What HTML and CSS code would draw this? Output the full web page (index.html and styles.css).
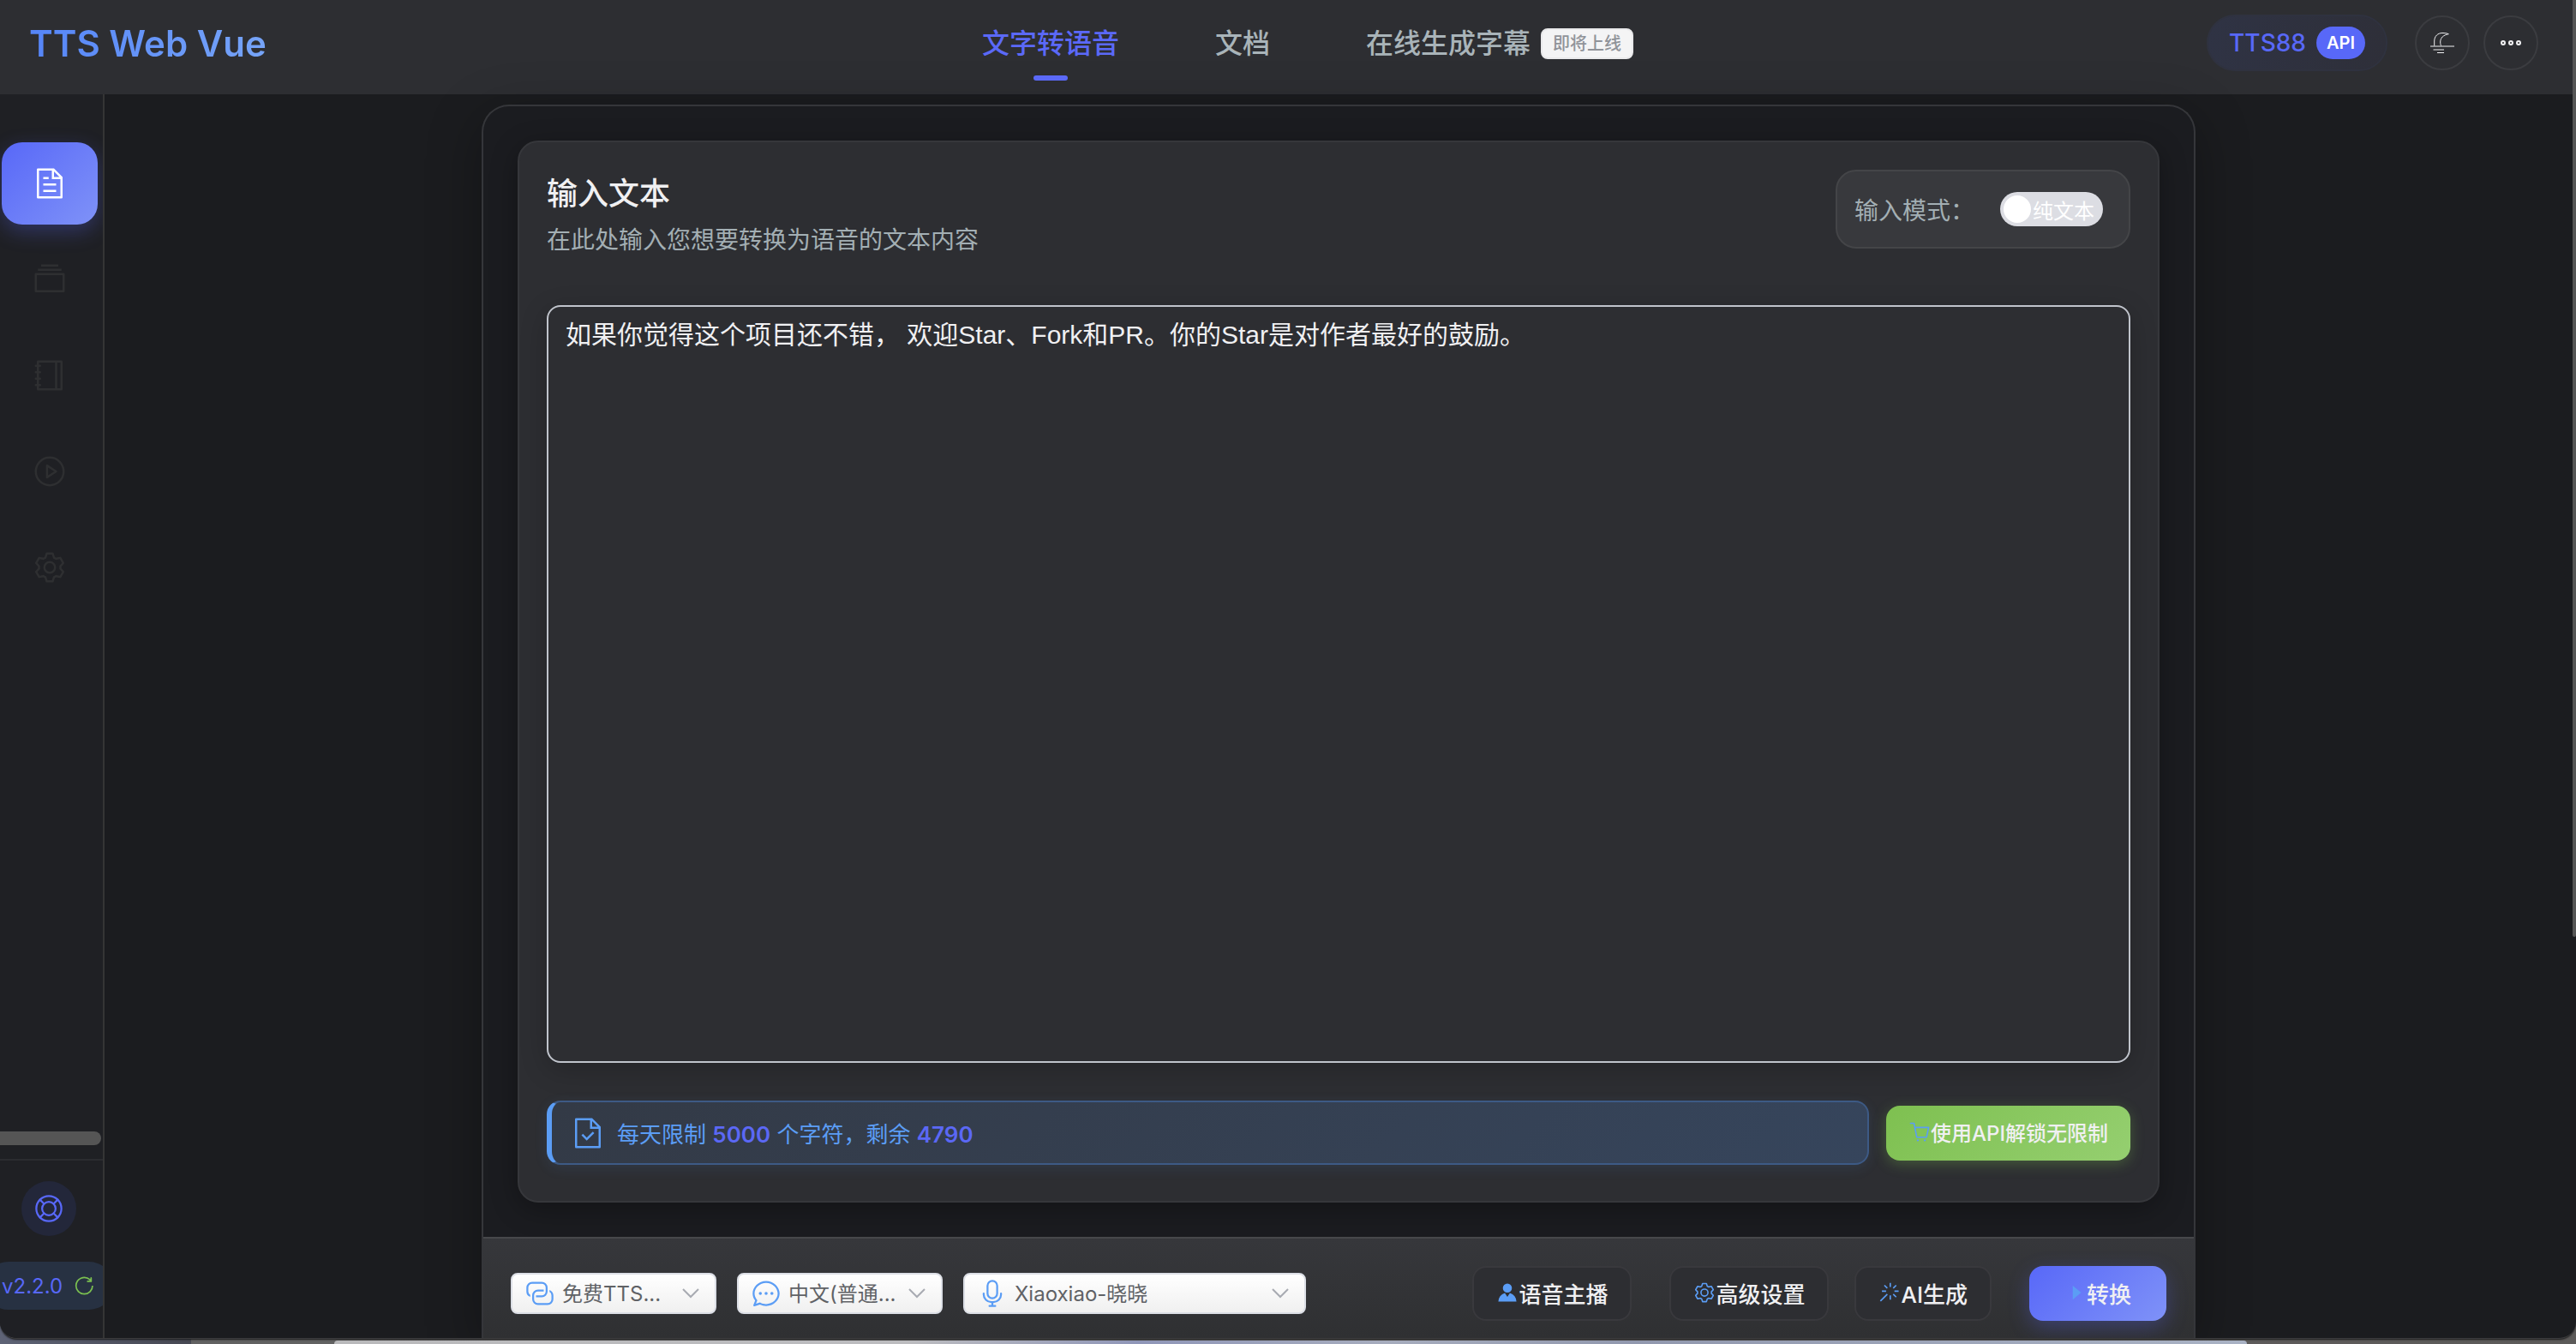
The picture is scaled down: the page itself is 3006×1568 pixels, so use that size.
FILE: index.html
```html
<!DOCTYPE html>
<html lang="zh-CN">

<head>
    <meta charset="UTF-8">
    <meta name="viewport" content="width=device-width, initial-scale=1.0">
    <title>TTS Web Vue</title>
    <link rel="stylesheet" href="styles.css">
</head>

<body>
    <div class="window">
        <div class="app">
            <header class="header">
                <h1 class="logo"><span>TTS Web Vue</span></h1>
                <nav class="nav">
                    <a class="nav-link active" href="#">文字转语音</a>
                    <a class="nav-link" href="#">文档</a>
                    <a class="nav-link" href="#">在线生成字幕<span class="tag">即将上线</span></a>
                </nav>
                <div class="header-right">
                    <a class="api-link" href="#">TTS88<span class="api-badge">API</span></a>
                    <button class="round-button" aria-label="切换主题">
                        <svg class="icon-moon" viewBox="0 0 28 28">
                            <path d="M0 18h28M3.500 22h12.500M8 25.500h8M4.700 17.500V12C4.700 6 9 2.500 14 2.500c3 0 5 .3 7.300 1.200C15.500 4.700 11.700 8 11.700 13c0 2 .2 3 1 4.500" />
                        </svg>
                    </button>
                    <button class="round-button" aria-label="更多">
                        <svg class="icon-more" viewBox="0 0 28 28">
                            <circle cx="5" cy="14" r="2" />
                            <circle cx="14" cy="14" r="2" />
                            <circle cx="23" cy="14" r="2" />
                        </svg>
                    </button>
                </div>
            </header>

            <div class="body">
                <!-- 侧边栏 -->
                <aside class="sidebar">
                    <div class="menu">
                        <a class="menu-item active" href="#" aria-label="文本">
                            <svg class="icon" viewBox="0 0 1024 1024"><path d="M832 384H576V128H192v768h640V384zm-26.496-64L640 154.496V320h165.504zM160 64h480l256 256v608a32 32 0 0 1-32 32H160a32 32 0 0 1-32-32V96a32 32 0 0 1 32-32zm160 448h384v64H320v-64zm0-192h160v64H320v-64zm0 384h384v64H320v-64z" /></svg>
                        </a>
                        <a class="menu-item" href="#" aria-label="批量">
                            <svg class="icon" viewBox="0 0 1024 1024"><path d="M128 384v448h768V384H128zm-32-64h832a32 32 0 0 1 32 32v512a32 32 0 0 1-32 32H96a32 32 0 0 1-32-32V352a32 32 0 0 1 32-32zm64-128h704v64H160zm96-128h512v64H256z" /></svg>
                        </a>
                        <a class="menu-item" href="#" aria-label="文档">
                            <svg class="icon" viewBox="0 0 1024 1024"><path d="M192 128v768h640V128H192zm-32-64h704a32 32 0 0 1 32 32v832a32 32 0 0 1-32 32H160a32 32 0 0 1-32-32V96a32 32 0 0 1 32-32zM672 128h64v768h-64z" /><path class="line" d="M96 224h128M96 416h128M96 608h128M96 800h128" /></svg>
                        </a>
                        <a class="menu-item" href="#" aria-label="播放">
                            <svg class="icon" viewBox="0 0 1024 1024"><circle class="line" cx="512" cy="512" r="416" /><path class="line" d="M432 336v352l272-176z" /></svg>
                        </a>
                        <a class="menu-item" href="#" aria-label="设置">
                            <svg class="icon" viewBox="0 0 1024 1024"><path d="M600.704 64a32 32 0 0 1 30.464 22.208l35.200 109.376c14.784 7.232 28.928 15.360 42.432 24.512l112.384-24.192a32 32 0 0 1 34.432 15.360L944.320 364.800a32 32 0 0 1-4.032 37.504l-77.120 85.120a357.120 357.120 0 0 1 0 49.024l77.120 85.248a32 32 0 0 1 4.032 37.504l-88.704 153.600a32 32 0 0 1-34.432 15.296L708.800 803.904c-13.440 9.088-27.648 17.280-42.368 24.512l-35.264 109.376A32 32 0 0 1 600.704 960H423.296a32 32 0 0 1-30.464-22.208L357.696 828.480a351.616 351.616 0 0 1-42.560-24.640l-112.320 24.256a32 32 0 0 1-34.432-15.360L79.680 659.200a32 32 0 0 1 4.032-37.504l77.120-85.248a357.120 357.120 0 0 1 0-48.896l-77.120-85.248A32 32 0 0 1 79.680 364.800l88.704-153.600a32 32 0 0 1 34.432-15.296l112.320 24.256c13.568-9.152 27.776-17.408 42.560-24.640l35.200-109.312A32 32 0 0 1 423.232 64H600.640zm-23.424 64H446.720l-36.352 113.088-24.512 11.968a294.113 294.113 0 0 0-34.816 20.096l-22.656 15.360-116.224-25.088-65.280 113.152 79.680 88.192-1.920 27.136a293.120 293.120 0 0 0 0 40.192l1.920 27.136-79.808 88.192 65.344 113.152 116.224-25.024 22.656 15.296a294.113 294.113 0 0 0 34.816 20.096l24.512 11.968L446.720 896h130.688l36.480-113.152 24.448-11.904a288.282 288.282 0 0 0 34.752-20.096l22.592-15.296 116.288 25.024 65.280-113.152-79.744-88.192 1.920-27.136a293.120 293.120 0 0 0 0-40.256l-1.920-27.136 79.808-88.128-65.344-113.152-116.288 24.960-22.592-15.232a287.616 287.616 0 0 0-34.752-20.096l-24.448-11.904L577.344 128zM512 320a192 192 0 1 1 0 384 192 192 0 0 1 0-384zm0 64a128 128 0 1 0 0 256 128 128 0 0 0 0-256z" /></svg>
                        </a>
                    </div>
                    <div class="menu-scroll"></div>
                    <div class="sidebar-bottom">
                        <button class="help-button" aria-label="帮助">
                            <svg class="icon" viewBox="0 0 1024 1024"><circle class="line" cx="512" cy="512" r="416" /><circle class="line" cx="512" cy="512" r="224" /><path class="line" d="M218 218l136 136M806 218L670 354M218 806l136-136M806 806L670 670" /></svg>
                        </button>
                        <a class="version" href="#">
                            <span>v2.2.0</span>
                            <svg class="icon-refresh" viewBox="0 0 1024 1024"><path d="M784.512 230.272v-50.560a32 32 0 1 1 64 0v149.056a32 32 0 0 1-32 32H667.520a32 32 0 1 1 0-64h92.992A320 320 0 1 0 524.800 833.152a320 320 0 0 0 320-320h64a384 384 0 0 1-384 384 384 384 0 0 1-384-384 384 384 0 0 1 643.712-282.880z" /></svg>
                        </a>
                    </div>
                </aside>

                <!-- 主内容 -->
                <main class="main">
                    <div class="container">
                        <section class="card">
                            <div class="card-header">
                                <div>
                                    <h2 class="title">输入文本</h2>
                                    <p class="subtitle">在此处输入您想要转换为语音的文本内容</p>
                                </div>
                                <div class="mode">
                                    <label for="mode">输入模式：</label>
                                    <span class="switch">
                                        <input type="checkbox" id="mode">
                                        <span class="switch-text">纯文本</span>
                                    </span>
                                </div>
                            </div>
                            <textarea class="text" aria-label="输入文本">如果你觉得这个项目还不错， 欢迎Star、Fork和PR。你的Star是对作者最好的鼓励。</textarea>
                            <div class="limit-row">
                                <div class="limit">
                                    <svg class="icon" viewBox="0 0 1024 1024"><path d="M805.504 320 640 154.496V320h165.504zM832 384H576V128H192v768h640V384zM160 64h480l256 256v608a32 32 0 0 1-32 32H160a32 32 0 0 1-32-32V96a32 32 0 0 1 32-32zm318.400 582.144 180.992-180.992L704.640 510.400 478.400 736.640 320 578.304l45.248-45.312L478.400 646.144z" /></svg>
                                    <span>每天限制 <b>5000</b> 个字符，剩余 <b>4790</b></span>
                                </div>
                                <button class="unlock">
                                    <svg class="button-icon" viewBox="0 0 1024 1024"><path d="M432 928a48 48 0 1 1 0-96 48 48 0 0 1 0 96zm320 0a48 48 0 1 1 0-96 48 48 0 0 1 0 96zM96 128a32 32 0 0 1 0-64h160a32 32 0 0 1 31.360 25.728L320.640 256H928a32 32 0 0 1 31.296 38.720l-96 448A32 32 0 0 1 832 768H384a32 32 0 0 1-31.360-25.728L229.760 128H96zm314.240 576h395.904l82.304-384H333.440l76.800 384z" /></svg>
                                    使用API解锁无限制
                                </button>
                            </div>
                        </section>

                        <footer class="toolbar">
                            <div class="selects">
                                <div class="select">
                                    <svg class="select-icon" viewBox="0 0 1024 1024"><path d="M640 384v64H448a128 128 0 0 0-128 128v128a128 128 0 0 0 128 128h320a128 128 0 0 0 128-128V576a128 128 0 0 0-64-110.848V394.880c74.560 26.368 128 97.472 128 181.056v128a192 192 0 0 1-192 192H448a192 192 0 0 1-192-192V576a192 192 0 0 1 192-192h192zM384 640v-64h192a128 128 0 0 0 128-128V320a128 128 0 0 0-128-128H256a128 128 0 0 0-128 128v128a128 128 0 0 0 64 110.848v70.272A192.064 192.064 0 0 1 64 448V320a192 192 0 0 1 192-192h320a192 192 0 0 1 192 192v128a192 192 0 0 1-192 192H384z" /></svg>
                                    <select aria-label="接口">
                                        <option>免费TTS...</option>
                                    </select>
                                    <svg class="arrow" viewBox="0 0 20 12"><path d="M1 1l9 9 9-9" /></svg>
                                </div>
                                <div class="select">
                                    <svg class="select-icon" viewBox="0 0 1024 1024"><path d="m174.720 855.680 135.296-45.120 23.680 11.840C388.096 849.536 448.576 864 512 864c211.840 0 384-166.784 384-352S723.840 160 512 160 128 326.784 128 512c0 69.120 24.960 139.264 70.848 199.232l22.080 28.800-46.272 115.584zm-45.248 82.560A32 32 0 0 1 89.600 896l58.368-145.920C94.720 680.320 64 596.864 64 512 64 299.904 256 96 512 96s448 203.904 448 416-192 416-448 416a461.056 461.056 0 0 1-206.912-48.384l-175.616 58.560z" /><circle cx="320" cy="512" r="51" /><circle cx="512" cy="512" r="51" /><circle cx="704" cy="512" r="51" /></svg>
                                    <select aria-label="语言">
                                        <option>中文(普通...</option>
                                    </select>
                                    <svg class="arrow" viewBox="0 0 20 12"><path d="M1 1l9 9 9-9" /></svg>
                                </div>
                                <div class="select wide">
                                    <svg class="select-icon" viewBox="0 0 1024 1024"><path d="M512 128a128 128 0 0 0-128 128v256a128 128 0 1 0 256 0V256a128 128 0 0 0-128-128zm0-64a192 192 0 0 1 192 192v256a192 192 0 1 1-384 0V256A192 192 0 0 1 512 64zm-32 832v-64a288 288 0 0 1-288-288v-32a32 32 0 0 1 64 0v32a224 224 0 0 0 224 224h64a224 224 0 0 0 224-224v-32a32 32 0 1 1 64 0v32a288 288 0 0 1-288 288v64h64a32 32 0 1 1 0 64H416a32 32 0 1 1 0-64h64z" /></svg>
                                    <select aria-label="声音">
                                        <option>Xiaoxiao-晓晓</option>
                                    </select>
                                    <svg class="arrow" viewBox="0 0 20 12"><path d="M1 1l9 9 9-9" /></svg>
                                </div>
                            </div>
                            <div class="actions">
                                <button class="action">
                                    <svg class="button-icon" viewBox="0 0 1024 1024"><path d="M628.736 528.896A416 416 0 0 1 928 928H96a415.872 415.872 0 0 1 299.264-399.104L512 704l116.736-175.104zM720 304a208 208 0 1 1-416 0 208 208 0 0 1 416 0z" /></svg>
                                    语音主播
                                </button>
                                <div class="action-group">
                                    <button class="action">
                                        <svg class="button-icon" viewBox="0 0 1024 1024"><path d="M600.704 64a32 32 0 0 1 30.464 22.208l35.200 109.376c14.784 7.232 28.928 15.360 42.432 24.512l112.384-24.192a32 32 0 0 1 34.432 15.360L944.320 364.800a32 32 0 0 1-4.032 37.504l-77.120 85.120a357.120 357.120 0 0 1 0 49.024l77.120 85.248a32 32 0 0 1 4.032 37.504l-88.704 153.600a32 32 0 0 1-34.432 15.296L708.800 803.904c-13.440 9.088-27.648 17.280-42.368 24.512l-35.264 109.376A32 32 0 0 1 600.704 960H423.296a32 32 0 0 1-30.464-22.208L357.696 828.480a351.616 351.616 0 0 1-42.560-24.640l-112.320 24.256a32 32 0 0 1-34.432-15.360L79.680 659.200a32 32 0 0 1 4.032-37.504l77.120-85.248a357.120 357.120 0 0 1 0-48.896l-77.120-85.248A32 32 0 0 1 79.680 364.800l88.704-153.600a32 32 0 0 1 34.432-15.296l112.320 24.256c13.568-9.152 27.776-17.408 42.560-24.640l35.200-109.312A32 32 0 0 1 423.232 64H600.640zm-23.424 64H446.720l-36.352 113.088-24.512 11.968a294.113 294.113 0 0 0-34.816 20.096l-22.656 15.360-116.224-25.088-65.280 113.152 79.680 88.192-1.920 27.136a293.120 293.120 0 0 0 0 40.192l1.920 27.136-79.808 88.192 65.344 113.152 116.224-25.024 22.656 15.296a294.113 294.113 0 0 0 34.816 20.096l24.512 11.968L446.720 896h130.688l36.480-113.152 24.448-11.904a288.282 288.282 0 0 0 34.752-20.096l22.592-15.296 116.288 25.024 65.280-113.152-79.744-88.192 1.920-27.136a293.120 293.120 0 0 0 0-40.256l-1.920-27.136 79.808-88.128-65.344-113.152-116.288 24.960-22.592-15.232a287.616 287.616 0 0 0-34.752-20.096l-24.448-11.904L577.344 128zM512 320a192 192 0 1 1 0 384 192 192 0 0 1 0-384zm0 64a128 128 0 1 0 0 256 128 128 0 0 0 0-256z" /></svg>
                                        高级设置
                                    </button>
                                    <button class="action">
                                        <svg class="button-icon" viewBox="0 0 1024 1024"><path d="M512 64h64v192h-64V64zm0 576h64v192h-64V640zM160 480v-64h192v64H160zm576 0v-64h192v64H736zM249.856 199.040l45.248-45.184L430.848 289.600 385.600 334.848 249.856 199.104zM657.152 606.400l45.248-45.248 135.744 135.744-45.248 45.248L657.152 606.400zM114.048 923.200 68.800 877.952l316.800-316.800 45.248 45.248-316.800 316.800zM702.400 334.848 657.152 289.600l135.744-135.744 45.248 45.248L702.400 334.848z" /></svg>
                                        AI生成
                                    </button>
                                </div>
                                <button class="action primary">
                                    <svg class="button-icon" viewBox="0 0 1024 1024"><path d="M384 192v640l384-320.064z" /></svg>
                                    转换
                                </button>
                            </div>
                        </footer>
                    </div>
                </main>
            </div>
        </div>
        <div class="page-scroll"></div>
    </div>
    <div class="dock"></div>
</body>

</html>
```

FILE: styles.css
```css
* {
    margin: 0;
    padding: 0;
    box-sizing: border-box;
}

body {
    display: flex;
    flex-direction: column;
    height: 100vh;
    overflow: hidden;
    background: linear-gradient(90deg, #5e6376, #464852 223px, #626262 223px, #5c5a59);
    color: #f0f0f2;
    font-family: Inter, "Noto Sans CJK SC", sans-serif;
}

a {
    color: inherit;
    text-decoration: none;
}

button,
select,
textarea {
    font-family: inherit;
    color: inherit;
}

svg {
    flex: none;
    fill: currentColor;
}

.line {
    fill: none;
    stroke: currentColor;
    stroke-width: 64;
    stroke-linecap: round;
    stroke-linejoin: round;
}

.icon {
    width: 40px;
    height: 40px;
}

.window {
    display: flex;
    flex: 1;
    min-height: 0;
    overflow: hidden;
    background: #1b1c1f;
    border-bottom: 1px solid #3c3c3e;
    border-radius: 0 0 20px 20px;
    box-shadow: 0 1px 2px #1c1c1c;
}

.app {
    display: flex;
    flex: 1;
    flex-direction: column;
    min-width: 0;
}

.page-scroll {
    width: 4px;
    height: 70%;
    background: #555;
    border-radius: 0 0 4px 4px;
}

.dock {
    height: 4px;
    margin: 2px 384px 0 390px;
    background: linear-gradient(90deg, #b9b9bb, #bcbcbf 30%, #8f96b8 42%, #a6acbd 55%, #9198ae 68%, #a9b2c4);
    border-radius: 12px 12px 0 0;
}

/* 顶部 */
.header {
    display: grid;
    grid-template-columns: 1fr auto 1fr;
    align-items: center;
    height: 110px;
    padding: 0 40px 10px 34px;
    background: #2d2e32;
}

.logo {
    padding-top: 2px;
    font-size: 42px;
    font-weight: 600;
    line-height: 60px;
}

.logo span {
    background: linear-gradient(90deg, #5585f8, #76a4f8);
    background-clip: text;
    color: transparent;
}

.nav {
    display: flex;
    gap: 112px;
    padding: 2px 0 0 56px;
    font-size: 32px;
    font-weight: 500;
    color: #a9b4b9;
}

.nav-link {
    display: flex;
    align-items: center;
    position: relative;
    line-height: 48px;
}

.nav-link.active {
    color: #5b69f8;
}

.nav-link.active::after {
    content: "";
    position: absolute;
    left: 50%;
    bottom: -19px;
    width: 40px;
    height: 6px;
    margin-left: -20px;
    background: #5b69f8;
    border-radius: 3px;
}

.tag {
    margin-left: 12px;
    padding: 0 12px;
    border: 2px solid #e9e9eb;
    border-radius: 8px;
    background: #f4f4f5;
    color: #909399;
    font-size: 20px;
    line-height: 32px;
}

.header-right {
    display: flex;
    align-items: center;
    justify-content: flex-end;
    gap: 16px;
}

.api-link {
    display: flex;
    align-items: center;
    gap: 12px;
    height: 66px;
    margin-right: 16px;
    padding: 0 24px;
    border: 2px solid #2f323f;
    border-radius: 33px;
    background: linear-gradient(90deg, #2f3344, #2e2f39);
    color: #5868f8;
    font-size: 28px;
    font-weight: 500;
}

.api-badge {
    padding: 0 12px;
    border-radius: 19px;
    background: #5868f8;
    color: #fff;
    font-size: 20px;
    font-weight: 600;
    line-height: 38px;
}

.round-button {
    display: flex;
    align-items: center;
    justify-content: center;
    width: 64px;
    height: 64px;
    border: 2px solid #3b3c40;
    border-radius: 50%;
    background: none;
}

.icon-moon,
.icon-more {
    width: 28px;
    height: 28px;
    fill: none;
    stroke: currentColor;
    stroke-width: 2;
}

.icon-moon {
    stroke-width: 1;
}

/* 侧边栏 */
.body {
    display: flex;
    flex: 1;
    min-height: 0;
}

.sidebar {
    display: flex;
    flex-direction: column;
    width: 122px;
    overflow: hidden;
    border-right: 2px solid #353535;
    background: #1f2024;
}

.menu {
    display: flex;
    flex: 1;
    flex-direction: column;
    gap: 16px;
    padding: 56px 6px 0 2px;
}

.menu-item {
    display: flex;
    align-items: center;
    justify-content: center;
    height: 96px;
    border-radius: 24px;
    color: #2e2f31;
}

.menu-item.active {
    background: linear-gradient(135deg, #5868f8, #7f92f8);
    box-shadow: 0 8px 24px rgba(88, 104, 248, 0.3);
    color: #fff;
}

.menu-scroll {
    width: 118px;
    height: 16px;
    margin-bottom: 16px;
    border-radius: 0 8px 8px 0;
    background: #555;
}

.sidebar-bottom {
    display: flex;
    flex-direction: column;
    align-items: center;
    gap: 30px;
    padding: 24px 6px 33px 0;
    border-top: 2px solid #2b2c30;
}

.help-button {
    display: flex;
    align-items: center;
    justify-content: center;
    width: 64px;
    height: 64px;
    border: none;
    border-radius: 50%;
    background: #23273a;
    color: #5868f8;
}

.help-button .icon {
    width: 36px;
    height: 36px;
}

.version {
    display: flex;
    align-items: center;
    justify-content: space-between;
    width: 150px;
    height: 56px;
    padding: 0 20px;
    border-radius: 28px;
    background: #273142;
    color: #5868f8;
    font-size: 24px;
}

.icon-refresh {
    width: 28px;
    height: 28px;
    color: #7bc050;
}

/* 主内容 */
.main {
    display: flex;
    flex: 1;
    justify-content: center;
    padding: 12px 40px 0;
}

.container {
    display: flex;
    flex: 1;
    flex-direction: column;
    max-width: 2000px;
    border: 2px solid #35363a;
    border-bottom: none;
    border-radius: 32px 32px 0 0;
    background: #1b1c20;
    box-shadow: 0 16px 64px rgba(0, 0, 0, 0.3);
}

.card {
    display: flex;
    flex: 1;
    flex-direction: column;
    margin: 40px;
    padding: 32px;
    border: 2px solid #36373b;
    border-radius: 24px;
    background: #2d2e32;
    box-shadow: 0 8px 32px rgba(0, 0, 0, 0.3);
}

.card-header {
    display: flex;
    align-items: flex-start;
    justify-content: space-between;
    height: 158px;
}

.title {
    font-size: 36px;
    font-weight: 500;
    line-height: 56px;
}

.subtitle {
    color: #a3afb4;
    font-size: 28px;
    line-height: 52px;
}

.mode {
    display: flex;
    align-items: center;
    gap: 30px;
    height: 92px;
    padding: 0 30px 0 20px;
    border: 2px solid #444548;
    border-radius: 24px;
    background: #38393d;
    color: #a3afb4;
    font-size: 28px;
}

.switch {
    display: flex;
    align-items: center;
    gap: 2px;
    width: 120px;
    height: 40px;
    padding: 0 4px;
    border-radius: 20px;
    background: #dcdde3;
}

.switch input {
    width: 32px;
    height: 32px;
    appearance: none;
    border-radius: 50%;
    background: #fff;
}

.switch-text {
    color: #fff;
    font-size: 24px;
}

.text {
    display: block;
    flex: 1;
    width: 100%;
    padding: 10px 20px;
    border: 2px solid #c0c4cc;
    border-radius: 16px;
    outline: none;
    resize: none;
    background: #2d2e32;
    box-shadow: 0 8px 32px rgba(0, 0, 0, 0.2);
    font-family: "Liberation Sans", "Noto Sans CJK SC", sans-serif;
    font-size: 30px;
    line-height: 46px;
}

.limit-row {
    display: flex;
    align-items: center;
    gap: 20px;
    padding: 44px 0 10px;
}

.limit {
    display: flex;
    flex: 1;
    align-items: center;
    gap: 14px;
    height: 75px;
    padding: 0 22px;
    border: 2px solid #3d5a85;
    border-left: 6px solid #5b9df5;
    border-radius: 16px;
    background: linear-gradient(135deg, #333a46, #36455c);
    box-shadow: 0 4px 16px rgba(91, 157, 245, 0.1);
    color: #5b9df5;
    font-size: 26px;
}

.limit b {
    color: #5b68f5;
    font-weight: 600;
}

.button-icon {
    width: 26px;
    height: 26px;
    color: #5b9df5;
}

.unlock {
    display: flex;
    align-items: center;
    height: 64px;
    padding: 0 26px 2px;
    border: none;
    border-radius: 16px;
    background: linear-gradient(135deg, #7ec050, #95cf70);
    box-shadow: 0 4px 16px rgba(126, 192, 80, 0.3);
    font-size: 24px;
    font-weight: 500;
}

/* 底部工具栏 */
.toolbar {
    display: flex;
    justify-content: space-between;
    padding: 32px 32px 20px;
    border-top: 2px solid #47484b;
    background: linear-gradient(#36373b, #2f3032);
}

.selects {
    display: flex;
    align-items: center;
    gap: 24px;
}

.select {
    display: flex;
    align-items: center;
    width: 240px;
    height: 48px;
    padding: 0 18px 0 14px;
    border: 2px solid #dcdfe6;
    border-radius: 8px;
    background: linear-gradient(#fff, #f0f0f0);
    color: #606266;
}

.select.wide {
    width: 400px;
}

.select-icon {
    width: 36px;
    height: 36px;
    color: #5b9df5;
}

.select select {
    flex: 1;
    min-width: 0;
    height: 44px;
    padding: 0 8px;
    appearance: none;
    border: none;
    outline: none;
    background: none;
    font-size: 24px;
}

.arrow {
    width: 20px;
    height: 12px;
    fill: none;
    stroke: #a8abb2;
    stroke-width: 2;
}

.actions {
    display: flex;
    gap: 44px;
}

.action-group {
    display: flex;
    gap: 30px;
}

.action {
    display: flex;
    align-items: center;
    height: 64px;
    padding: 0 26px 2px;
    border: 2px solid #39393d;
    border-radius: 16px;
    background: #2d2e32;
    font-size: 26px;
    font-weight: 500;
}

.action.primary {
    padding: 0 41px 2px;
    border: none;
    background: linear-gradient(135deg, #5868f8, #7f92f8);
    box-shadow: 0 8px 24px rgba(88, 104, 248, 0.3);
}
```
